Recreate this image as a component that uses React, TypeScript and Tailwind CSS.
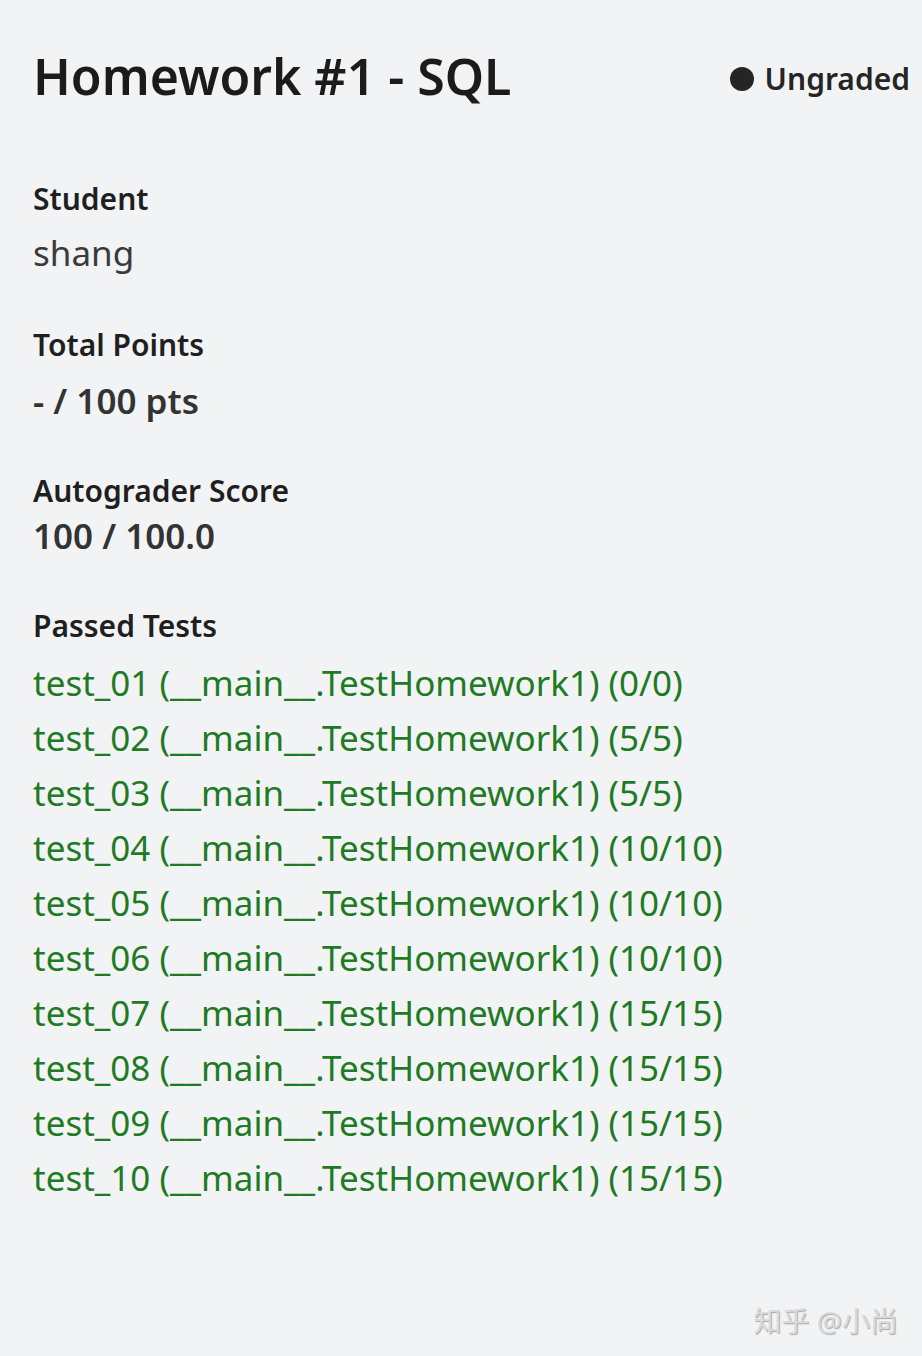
import React from "react";

const tests = [
  ["01", "0/0"],
  ["02", "5/5"],
  ["03", "5/5"],
  ["04", "10/10"],
  ["05", "10/10"],
  ["06", "10/10"],
  ["07", "15/15"],
  ["08", "15/15"],
  ["09", "15/15"],
  ["10", "15/15"],
];

export default function App() {
  return (
    <div
      className="relative min-h-[1356px] w-[922px] bg-[#f2f3f5] pl-[33px] pr-[12px] font-stretch-semi-condensed text-[#252525]"
      style={{ fontFamily: '"Noto Sans", "Noto Sans CJK SC", sans-serif' }}
    >
      <div className="flex items-start justify-between pt-[44px]">
        <h1 className="text-[50px] font-semibold leading-[64px] text-[#1b1b1b]">Homework #1 - SQL</h1>
        <div className="mt-[17px] flex items-center gap-[11px]">
          <span className="h-[24px] w-[24px] rounded-full bg-[#252525]" />
          <span className="text-[30px] font-semibold leading-[36px]">Ungraded</span>
        </div>
      </div>

      <div className="mt-[73px]">
        <div className="text-[30px] font-semibold leading-[36px] text-[#1f1f1f]">Student</div>
        <div className="mt-[14px] text-[35px] leading-[44px] text-[#3a3a3a]">shang</div>
      </div>

      <div className="mt-[52px]">
        <div className="text-[30px] font-semibold leading-[36px] text-[#1f1f1f]">Total Points</div>
        <div className="mt-[16px] text-[35px] font-semibold leading-[44px] text-[#333]">- / 100 pts</div>
      </div>

      <div className="mt-[50px]">
        <div className="text-[30px] font-semibold leading-[36px] text-[#1f1f1f]">Autograder Score</div>
        <div className="mt-[5px] text-[35px] font-semibold leading-[44px] text-[#333]">100 / 100.0</div>
      </div>

      <div className="mt-[50px]">
        <div className="text-[30px] font-semibold leading-[36px] text-[#1f1f1f]">Passed Tests</div>
        <div className="mt-[11px] flex flex-col">
          {tests.map(([n, s]) => (
            <div key={n} className="text-[35px] leading-[55px] text-[#1f7a24]">
              test_{n} (__main__.TestHomework1) ({s})
            </div>
          ))}
        </div>
      </div>

      <div className="absolute bottom-[14px] right-[24px] text-[28px] text-[#d9dadd] [text-shadow:1px_1px_1px_rgba(0,0,0,0.3)]">
        知乎 @小尚
      </div>
    </div>
  );
}
